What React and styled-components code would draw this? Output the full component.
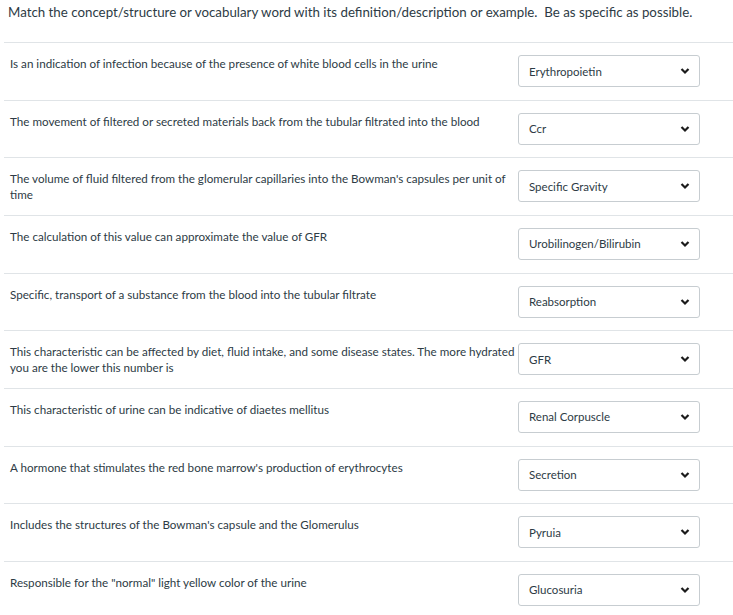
import React from 'react'
import styled, { createGlobalStyle } from 'styled-components'

const GlobalStyle = createGlobalStyle`
  body {
    margin: 0;
    background: #fff;
    font-family: Lato, "Open Sans", sans-serif;
    color: #2d3b45;
  }
`

const items = [
  ['Is an indication of infection because of the presence of white blood cells in the urine', 'Erythropoietin'],
  ['The movement of filtered or secreted materials back from the tubular filtrated into the blood', 'Ccr'],
  ["The volume of fluid filtered from the glomerular capillaries into the Bowman's capsules per unit of time", 'Specific Gravity'],
  ['The calculation of this value can approximate the value of GFR', 'Urobilinogen/Bilirubin'],
  ['Specific, transport of a substance from the blood into the tubular filtrate', 'Reabsorption'],
  ['This characteristic can be affected by diet, fluid intake, and some disease states. The more hydrated you are the lower this number is', 'GFR'],
  ['This characteristic of urine can be indicative of diaetes mellitus', 'Renal Corpuscle'],
  ["A hormone that stimulates the red bone marrow's production of erythrocytes", 'Secretion'],
  ["Includes the structures of the Bowman's capsule and the Glomerulus", 'Pyruia'],
  ['Responsible for the "normal" light yellow color of the urine', 'Glucosuria'],
]

function App() {
  return (
    <Page>
      <GlobalStyle />
      <Intro>
        Match the concept/structure or vocabulary word with its definition/description or example.&nbsp; Be as specific as possible.
      </Intro>
      <List>
        {items.map(([q, a], i) => (
          <Row key={i}>
            <Question>{q}</Question>
            <Select>
              <span>{a}</span>
              <svg width="10" height="8" viewBox="0 0 10 8">
                <path d="M1.5 2 L5 5.5 L8.5 2" fill="none" stroke="#1b1b1b" strokeWidth="2.2" />
              </svg>
            </Select>
          </Row>
        ))}
      </List>
    </Page>
  )
}

export default App

const Page = styled.div`
  padding: 4px 0 0 4px;
`

const Intro = styled.div`
  font-size: 13.3px;
  line-height: 16px;
  padding: 0 0 22px 4px;
  border-bottom: 1px solid #e0e4e7;
`

const List = styled.div`
  display: flex;
  flex-direction: column;
`

const Row = styled.div`
  display: grid;
  grid-template-columns: 1fr 182px;
  column-gap: 2px;
  height: 57.67px;
  box-sizing: border-box;
  padding: 12px 33px 0 6px;
  border-bottom: 1px solid #e0e4e7;
  align-items: start;
`

const Question = styled.div`
  font-size: 11.65px;
  line-height: 16px;
  padding-top: 1px;
`

const Select = styled.div`
  box-sizing: border-box;
  height: 32px;
  border: 1px solid #c7cdd1;
  border-radius: 3px;
  display: flex;
  align-items: center;
  justify-content: space-between;
  padding: 0 9px 0 10px;
  font-size: 11.5px;
  color: #2d3b45;
  background: #fff;
`
